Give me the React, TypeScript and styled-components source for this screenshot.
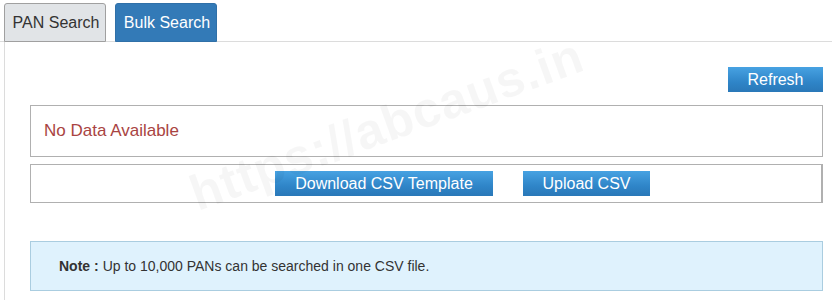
import React from 'react'
import styled, { createGlobalStyle } from 'styled-components'

const GlobalStyle = createGlobalStyle`
  body {
    margin: 0;
    background: #fff;
    font-family: "Liberation Sans", Arial, sans-serif;
  }
`

const App = () => {
  return (
    <>
      <GlobalStyle />
      <StyledPage>
        <TabBar>
          <Tab>PAN Search</Tab>
          <Tab active>Bulk Search</Tab>
        </TabBar>
        <Panel>
          <Toolbar>
            <BlueButton width={95}>Refresh</BlueButton>
          </Toolbar>
          <Box height={52}>
            <EmptyText>No Data Available</EmptyText>
          </Box>
          <Box height={39} className='actions'>
            <BlueButton width={218}>Download CSV Template</BlueButton>
            <BlueButton width={127}>Upload CSV</BlueButton>
          </Box>
          <Note>
            <b>Note :</b> Up to 10,000 PANs can be searched in one CSV file.
          </Note>
        </Panel>
        <Watermark>https://abcaus.in</Watermark>
      </StyledPage>
    </>
  )
}

export default App

const StyledPage = styled.div`
  position: relative;
  width: 832px;
  height: 300px;
  overflow: hidden;
`

const TabBar = styled.div`
  display: flex;
  align-items: flex-end;
  gap: 9px;
  padding: 3px 0 0 4px;
  height: 38px;
  border-bottom: 1px solid #dcdcdc;
`

const Tab = styled.div<{ active?: boolean }>`
  box-sizing: border-box;
  display: flex;
  align-items: center;
  justify-content: center;
  width: 102px;
  height: 39px;
  margin-bottom: -1px;
  padding-left: 2px;
  border: 1px solid ${p => (p.active ? '#3070a8' : '#a0a0a0')};
  border-radius: 3px 3px 0 0;
  font-size: 16px;

  color: ${p => (p.active ? '#fff' : '#333')};
  background-color: ${p => (p.active ? '#337ab7' : '#e1e4e7')};
`

const Panel = styled.div`
  display: flex;
  flex-direction: column;
  margin-left: 4px;
  padding: 25px 9px 0 25px;
  height: 234px;
  border-left: 1px solid #dcdcdc;
`

const Toolbar = styled.div`
  display: flex;
  justify-content: flex-end;
  margin-bottom: 13px;
`

const BlueButton = styled.button<{ width: number }>`
  box-sizing: border-box;
  width: ${p => p.width}px;
  height: 25px;
  padding: 0;
  border: none;
  font-family: "Liberation Sans", Arial, sans-serif;
  font-size: 16px;

  color: #fff;
  background: linear-gradient(to bottom, #47a2e2 0%, #2f85c8 60%, #2a78b8 100%);
`

const Box = styled.div<{ height: number }>`
  box-sizing: border-box;
  display: flex;
  align-items: center;
  height: ${p => p.height}px;
  margin-bottom: 7px;
  border: 1px solid #b0b0b0;

  &.actions {
    gap: 30px;
    padding-left: 244px;
    border-right-width: 2px;
  }
`

const EmptyText = styled.span`
  padding-left: 13px;
  font-size: 17px;

  color: #a94442;
`

const Note = styled.div`
  box-sizing: border-box;
  display: flex;
  align-items: center;
  gap: 4px;
  margin-top: 31px;
  height: 50px;
  padding-left: 28px;
  border: 1px solid #aacde0;
  font-size: 14px;

  color: #333;
  background-color: #dff2fd;

  b {
    font-weight: 700;
  }
`

const Watermark = styled.div`
  position: absolute;
  left: 182px;
  top: 168px;
  font-size: 50px;
  font-weight: 700;
  letter-spacing: 1px;
  pointer-events: none;
  transform: rotate(-20deg);
  transform-origin: left top;
  white-space: nowrap;

  color: rgba(0, 0, 0, 0.035);
`
